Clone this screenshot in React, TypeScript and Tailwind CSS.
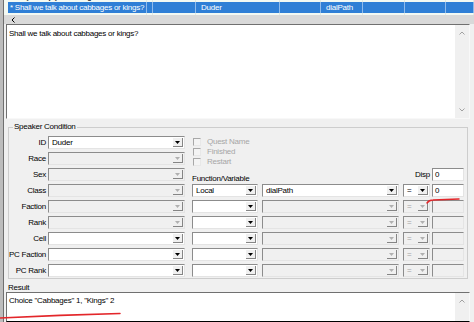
import { clsx } from 'clsx'

const ui = "font-['Liberation_Sans',Arial,sans-serif] text-[8px] tracking-[-0.25px] leading-none"

const listCols = ['w-[139px]', 'w-[5px]', 'w-[43px]', 'w-[84px]', 'w-[41px]', 'w-[42px]', 'w-[42px]', 'w-[41px]', 'flex-1']

const listRows = [
  { cells: ['* Do you enjoy a cabbage?', '', '', 'Dude', '', 'dialPath', 'Match', '', ''], selected: false },
  { cells: ['* Shall we talk about cabbages or kings?', '', '', 'Duder', '', 'dialPath', '', '', ''], selected: true },
  { cells: ['Well, look who it is. Have I got a bar', '', '', 'Moran', '', 'MatchM', '', '', ''], selected: false },
]

const leftRows = [
  { label: 'ID', value: 'Duder', disabled: false },
  { label: 'Race', value: '', disabled: true },
  { label: 'Sex', value: '', disabled: true },
  { label: 'Class', value: '', disabled: true },
  { label: 'Faction', value: '', disabled: true },
  { label: 'Rank', value: '', disabled: true },
  { label: 'Cell', value: '', disabled: false },
  { label: 'PC Faction', value: '', disabled: false },
  { label: 'PC Rank', value: '', disabled: false },
]

function DropArrow({ disabled }: { disabled?: boolean }) {
  return (
    <div className="ml-auto flex h-full w-[10px] shrink-0 items-center justify-center border-r border-b border-r-[#858585] border-b-[#858585] bg-[#f0f0f0]">
      <svg width="5" height="3" viewBox="0 0 5 3">
        <path d="M0 0h5L2.5 3z" fill={disabled ? '#b0b0b0' : '#000'} />
      </svg>
    </div>
  )
}

function Combo({ w, value, disabled }: { w: string; value?: string; disabled?: boolean }) {
  return (
    <div
      className={clsx(
        'flex h-[13px] shrink-0 items-stretch border border-t-[#8c8c8c] border-l-[#8c8c8c] border-r-[#e4e4e4] border-b-[#e4e4e4] p-px',
        disabled ? 'bg-[#f0f0f0]' : 'bg-white',
        w,
      )}
    >
      <span className={clsx('flex flex-1 items-center truncate pl-[2px]', disabled ? 'text-[#a0a0a0]' : 'text-black')}>
        {value}
      </span>
      <DropArrow disabled={disabled} />
    </div>
  )
}

function TextBox({ value, disabled }: { value?: string; disabled?: boolean }) {
  return (
    <div
      className={clsx(
        'flex h-[13px] w-[32px] shrink-0 items-center border border-t-[#8c8c8c] border-l-[#8c8c8c] border-r-[#e4e4e4] border-b-[#e4e4e4] pl-[2px]',
        disabled ? 'bg-[#f0f0f0]' : 'bg-white',
      )}
    >
      {value}
    </div>
  )
}

function Check({ label }: { label: string }) {
  return (
    <div className="flex h-[10px] items-center gap-[6px] pl-px text-[#a6a6a6]">
      <div className="h-[8px] w-[8px] border border-t-[#a8a8a8] border-l-[#a8a8a8] border-r-[#e8e8e8] border-b-[#e8e8e8] bg-[#f4f4f4]" />
      {label}
    </div>
  )
}

function ScrollStrip({ up, down }: { up: boolean; down: boolean }) {
  return (
    <div className="flex h-full w-[14px] shrink-0 flex-col items-center justify-between bg-[#f0f0f0] py-[6px]">
      {up && (
        <svg width="6" height="4" viewBox="0 0 6 4">
          <path d="M0.5 3.5L3 1l2.5 2.5" stroke="#a0a0a0" fill="none" />
        </svg>
      )}
      {down && (
        <svg width="6" height="4" viewBox="0 0 6 4">
          <path d="M0.5 0.5L3 3l2.5-2.5" stroke="#a0a0a0" fill="none" />
        </svg>
      )}
    </div>
  )
}

export default function App() {
  return (
    <div className={clsx('relative flex h-[322px] w-[474px] overflow-hidden bg-[#f0f0f0] text-black', ui)}>
      {/* window frame */}
      <div className="w-[3px] shrink-0 border-r border-r-[#6f6f6f] bg-[#bdbdbd] box-content" />

      <div className="flex min-w-0 flex-1 flex-col">
        {/* dialogue list */}
        <div className="flex h-[20px] flex-col overflow-hidden bg-[#f3f9f3] pl-[4px]">
          {listRows.map((row, i) => (
            <div
              key={i}
              className={clsx(
                'flex h-[11px] shrink-0',
                i === 0 && 'mt-[-9px]',
                row.selected ? 'bg-[#2f7fd6] text-white' : 'text-black',
              )}
            >
              {row.cells.map((c, j) => (
                <div
                  key={j}
                  className={clsx(
                    'flex items-center overflow-hidden whitespace-nowrap border-r',
                    listCols[j],
                    j === 0 ? 'pl-[2px]' : 'pl-[5px]',
                    row.selected ? 'border-r-[#8fbbec]' : 'border-r-[#e2ebe2]',
                  )}
                >
                  {c}
                </div>
              ))}
            </div>
          ))}
        </div>
        <div className="flex h-[9px] shrink-0 items-center bg-[#d9d9d9] pl-[7px]">
          <svg width="4" height="6" viewBox="0 0 4 6">
            <path d="M3.5 0.5L1 3l2.5 2.5" stroke="#000" fill="none" />
          </svg>
        </div>

        {/* response text */}
        <div className="ml-[2px] flex h-[95px] w-[464px] shrink-0 border border-t-[#707070] border-l-[#707070] border-r-[#f8f8f8] border-b-[#f8f8f8] bg-white">
          <div className="flex-1 pl-[2px] pt-[5px]">Shall we talk about cabbages or kings?</div>
          <ScrollStrip up down />
        </div>

        {/* speaker condition */}
        <fieldset className="mt-[4px] ml-[4px] w-[460px] border border-[#cdcdcd] pb-px">
          <legend className="ml-[4px] px-px">Speaker Condition</legend>
          <div className="flex pt-[5px]">
            <div className="flex flex-col gap-[3px]">
              {leftRows.map((r) => (
                <div key={r.label} className="flex h-[13px] items-center">
                  <span className="w-[37px] whitespace-nowrap text-right">{r.label}</span>
                  <div className="ml-[2px]">
                    <Combo w="w-[137px]" value={r.value} disabled={r.disabled} />
                  </div>
                </div>
              ))}
            </div>

            <div className="ml-[7px] flex w-[272px] flex-col">
              <div className="mt-px flex flex-col">
                <Check label="Quest Name" />
                <Check label="Finished" />
                <Check label="Restart" />
              </div>
              <div className="mt-px flex h-[13px] items-end justify-between">
                <span className="mb-[-2px]">Function/Variable</span>
                <div className="flex items-center gap-[2px] self-stretch">
                  <span>Disp</span>
                  <TextBox value="0" />
                </div>
              </div>
              <div className="mt-[3px] flex flex-col gap-[3px]">
                {[0, 1, 2, 3, 4, 5].map((i) => (
                  <div key={i} className="flex h-[13px] items-center">
                    <Combo w="w-[66px]" value={i === 0 ? 'Local' : ''} />
                    <div className="ml-[4px]">
                      <Combo w="w-[137px]" value={i === 0 ? 'dialPath' : ''} disabled={i !== 0} />
                    </div>
                    <div className="ml-[4px]">
                      <Combo w="w-[27px]" value="=" disabled={i !== 0} />
                    </div>
                    <div className="ml-[2px]">
                      <TextBox value={i === 0 ? '0' : ''} disabled={i !== 0} />
                    </div>
                  </div>
                ))}
              </div>
            </div>
          </div>
        </fieldset>

        {/* result */}
        <div className="mt-[5px] ml-[4px] h-[8px] shrink-0">Result</div>
        <div className="ml-[2px] flex min-h-[30px] w-[464px] flex-1 border border-t-[#707070] border-l-[#707070] border-r-[#f8f8f8] bg-white">
          <div className="flex-1 pl-[2px] pt-[4px]">Choice "Cabbages" 1, "Kings" 2</div>
          <ScrollStrip up down={false} />
        </div>
      </div>

      {/* red hand-drawn marks */}
      <svg className="pointer-events-none absolute inset-0" width="474" height="322">
        <path d="M427 203 Q429 200 433 200 L459 199" stroke="#e3262a" strokeWidth="1.5" fill="none" strokeLinecap="round" />
        <path d="M0 318 Q60 315 120 313.5" stroke="#e3262a" strokeWidth="1.5" fill="none" strokeLinecap="round" />
      </svg>
    </div>
  )
}
